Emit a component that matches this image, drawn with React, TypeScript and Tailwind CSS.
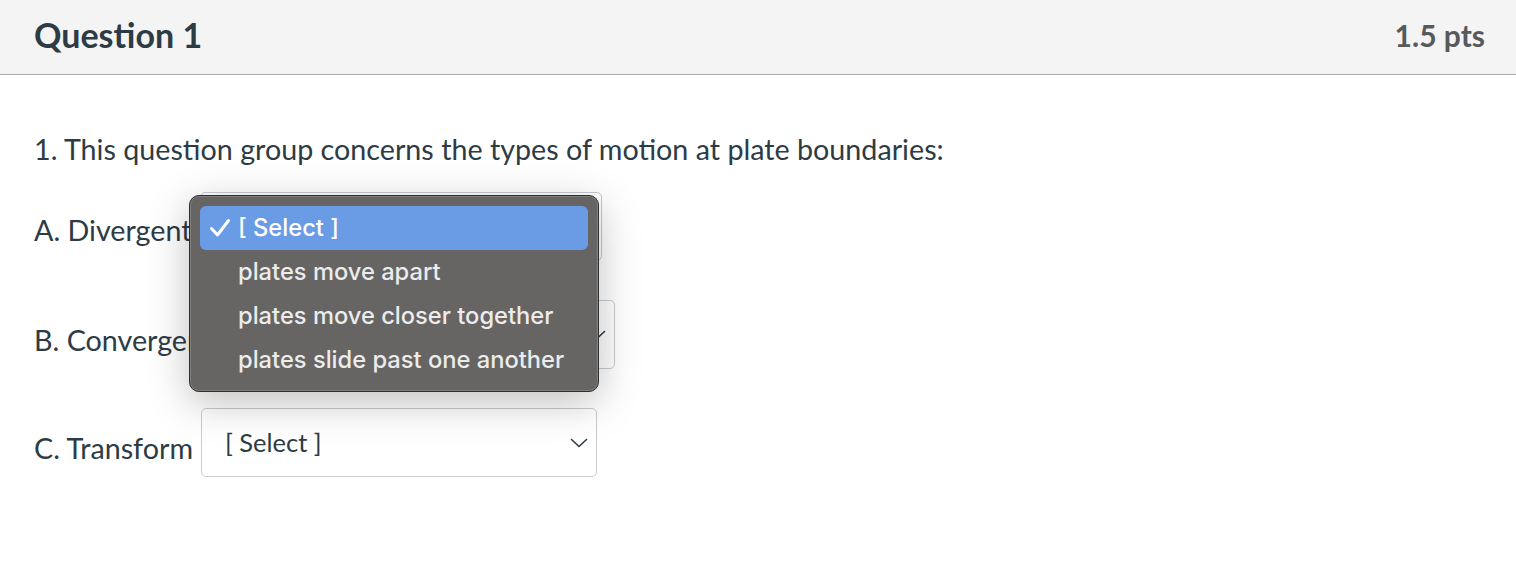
import React from "react";

const lato = { fontFamily: "Lato, 'Liberation Sans', sans-serif" };

function Chevron() {
  return (
    <svg width="18" height="12" viewBox="0 0 18 12" fill="none">
      <path d="M1.5 2.5 L9 9.5 L16.5 2.5" stroke="#2d3b45" strokeWidth="1.6" strokeLinecap="round" strokeLinejoin="round" />
    </svg>
  );
}

function Check() {
  return (
    <svg width="22" height="20" viewBox="0 0 22 20" fill="none">
      <path d="M2.5 10.5 L8.5 17 L19.5 2.5" stroke="white" strokeWidth="3" strokeLinecap="round" strokeLinejoin="round" />
    </svg>
  );
}

function SelectBox({ width }: { width: string }) {
  return (
    <div className={`relative ${width} h-[69px] rounded-[5px] border border-[#c7cdd1] bg-white flex items-start justify-between pl-[23px] pr-[8px]`}>
      <span className="text-[25.5px] text-[#2d3b45] mt-[17px] leading-[32px]" style={lato}>[ Select ]</span>
      <span className="mt-[28px]"><Chevron /></span>
    </div>
  );
}

export default function App() {
  const items = ["plates move apart", "plates move closer together", "plates slide past one another"];
  return (
    <div className="w-[1516px] h-[574px] bg-white relative overflow-hidden" style={lato}>
      <div className="h-[75px] bg-[#f4f4f4] border-b border-[#a8a8a8] flex items-center justify-between pl-[34px] pr-[31px]">
        <div className="text-[34px] font-bold text-[#2d3b45] leading-none -mt-[5px]">Question 1</div>
        <div className="text-[30px] font-bold text-[#565a5c] leading-none -mt-[4px]">1.5 pts</div>
      </div>
      <div className="px-[34px]">
        <p className="text-[28.7px] text-[#2d3b45] mt-[56px] leading-[36px]">1. This question group concerns the types of motion at plate boundaries:</p>
        <div className="mt-[25px] flex flex-col gap-[39px]">
          <div className="flex items-start">
            <span className="text-[28.7px] text-[#2d3b45] leading-[36px] mt-[20px]">A. Divergent</span>
            <div className="ml-[8px]"><SelectBox width="w-[402px]" /></div>
          </div>
          <div className="flex items-start">
            <span className="text-[28.7px] text-[#2d3b45] leading-[36px] mt-[22px]">B. Convergent</span>
            <div className="ml-[8px]"><SelectBox width="w-[394px]" /></div>
          </div>
          <div className="flex items-start">
            <span className="text-[28.7px] text-[#2d3b45] leading-[36px] mt-[22px]">C. Transform</span>
            <div className="ml-[8px]"><SelectBox width="w-[396px]" /></div>
          </div>
        </div>
      </div>

      <div
        className="absolute left-[189px] top-[195px] w-[410px] h-[197px] rounded-[10px] bg-[#676563] border border-[#2f2f2f] pt-[10px] px-[10px] shadow-[0_10px_40px_rgba(0,0,0,0.25),inset_0_0_0_1px_rgba(255,255,255,0.18)]"
        style={{ fontFamily: "Inter, 'Noto Sans', sans-serif" }}
      >
        <div className="h-[44px] rounded-[6px] bg-[#6a9be5] flex items-center text-white text-[23.7px] font-medium">
          <span className="w-[38px] pl-[9px] flex items-center"><Check /></span>
          <span>[ Select ]</span>
        </div>
        {items.map((t) => (
          <div key={t} className="h-[44px] flex items-center pl-[38px] text-[23.7px] font-medium text-[#ececec]">
            {t}
          </div>
        ))}
      </div>
    </div>
  );
}
